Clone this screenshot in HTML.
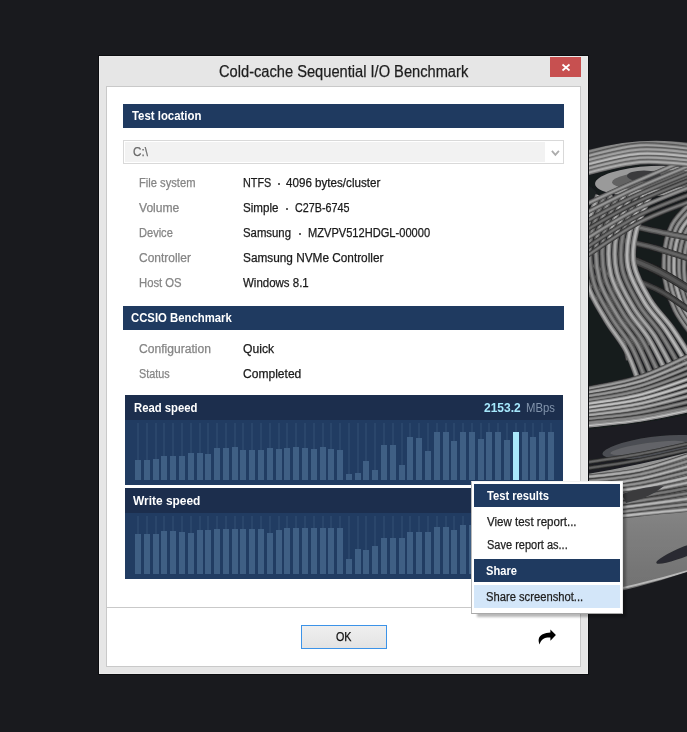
<!DOCTYPE html>
<html><head><meta charset="utf-8">
<style>
html,body{margin:0;padding:0;}
body{width:687px;height:732px;overflow:hidden;background:#191a1e;position:relative;font-family:"Liberation Sans",sans-serif;}
.a{position:absolute;}
.t{position:absolute;white-space:nowrap;line-height:1;}
</style></head><body>
<!-- background ribbons -->
<svg class="a" style="left:0;top:0" width="687" height="732" viewBox="0 0 687 732">
<defs><clipPath id="blob"><path d="M588 150 Q640 136 690 143 L690 571 Q640 588 588 598 Z"/></clipPath><filter id="sft"><feGaussianBlur stdDeviation="0.5"/></filter></defs>
<g clip-path="url(#blob)" fill="none" filter="url(#sft)" stroke-linecap="butt">
<rect x="585" y="130" width="110" height="480" fill="#191a1e"/>
<ellipse cx="652" cy="181" rx="57" ry="15" fill="#9a9a9a" transform="rotate(-3 652 181)"/>
<ellipse cx="658" cy="180" rx="46" ry="9.5" fill="#626262" transform="rotate(-3 658 180)"/>
<ellipse cx="644" cy="176" rx="17" ry="5.5" fill="#3a3b3e"/>
<path d="M585 186 Q593 185 597 194 Q594 203 586 208 Z" fill="#1e2024"/>
<path d="M705.0 190.0 C699.5 195.8 678.8 211.7 672.0 225.0 C665.2 238.3 663.5 255.8 664.0 270.0 C664.5 284.2 669.0 297.5 675.0 310.0 C681.0 322.5 695.8 339.2 700.0 345.0" stroke="#383838" stroke-width="5.40"/>
<path d="M705.0 190.0 C699.5 195.8 678.8 211.7 672.0 225.0 C665.2 238.3 663.5 255.8 664.0 270.0 C664.5 284.2 669.0 297.5 675.0 310.0 C681.0 322.5 695.8 339.2 700.0 345.0" stroke="#676767" stroke-width="4.20"/>
<path d="M705.0 190.0 C699.5 195.8 678.8 211.7 672.0 225.0 C665.2 238.3 663.5 255.8 664.0 270.0 C664.5 284.2 669.0 297.5 675.0 310.0 C681.0 322.5 695.8 339.2 700.0 345.0" stroke="#8d8d8d" stroke-width="2.10"/>
<path d="M707.5 193.8 C702.3 199.4 682.9 214.8 676.5 227.5 C670.1 240.2 668.5 256.5 669.0 270.0 C669.5 283.5 673.6 296.7 679.2 308.8 C684.9 320.8 699.0 336.9 703.0 342.5" stroke="#3b3b3b" stroke-width="5.40"/>
<path d="M707.5 193.8 C702.3 199.4 682.9 214.8 676.5 227.5 C670.1 240.2 668.5 256.5 669.0 270.0 C669.5 283.5 673.6 296.7 679.2 308.8 C684.9 320.8 699.0 336.9 703.0 342.5" stroke="#6c6c6c" stroke-width="4.20"/>
<path d="M707.5 193.8 C702.3 199.4 682.9 214.8 676.5 227.5 C670.1 240.2 668.5 256.5 669.0 270.0 C669.5 283.5 673.6 296.7 679.2 308.8 C684.9 320.8 699.0 336.9 703.0 342.5" stroke="#949494" stroke-width="2.10"/>
<path d="M710.0 197.5 C705.2 202.9 687.0 217.9 681.0 230.0 C675.0 242.1 673.6 257.1 674.0 270.0 C674.4 282.9 678.2 295.8 683.5 307.5 C688.8 319.2 702.2 334.6 706.0 340.0" stroke="#454545" stroke-width="5.40"/>
<path d="M710.0 197.5 C705.2 202.9 687.0 217.9 681.0 230.0 C675.0 242.1 673.6 257.1 674.0 270.0 C674.4 282.9 678.2 295.8 683.5 307.5 C688.8 319.2 702.2 334.6 706.0 340.0" stroke="#7e7e7e" stroke-width="4.20"/>
<path d="M710.0 197.5 C705.2 202.9 687.0 217.9 681.0 230.0 C675.0 242.1 673.6 257.1 674.0 270.0 C674.4 282.9 678.2 295.8 683.5 307.5 C688.8 319.2 702.2 334.6 706.0 340.0" stroke="#adadad" stroke-width="2.10"/>
<path d="M712.5 201.2 C708.0 206.5 691.1 221.0 685.5 232.5 C679.9 244.0 678.6 257.7 679.0 270.0 C679.4 282.3 682.8 295.0 687.8 306.2 C692.8 317.5 705.5 332.3 709.0 337.5" stroke="#393939" stroke-width="5.40"/>
<path d="M712.5 201.2 C708.0 206.5 691.1 221.0 685.5 232.5 C679.9 244.0 678.6 257.7 679.0 270.0 C679.4 282.3 682.8 295.0 687.8 306.2 C692.8 317.5 705.5 332.3 709.0 337.5" stroke="#686868" stroke-width="4.20"/>
<path d="M712.5 201.2 C708.0 206.5 691.1 221.0 685.5 232.5 C679.9 244.0 678.6 257.7 679.0 270.0 C679.4 282.3 682.8 295.0 687.8 306.2 C692.8 317.5 705.5 332.3 709.0 337.5" stroke="#8e8e8e" stroke-width="2.10"/>
<path d="M715.0 205.0 C710.8 210.0 695.2 224.2 690.0 235.0 C684.8 245.8 683.7 258.3 684.0 270.0 C684.3 281.7 687.3 294.2 692.0 305.0 C696.7 315.8 708.7 330.0 712.0 335.0" stroke="#3a3a3a" stroke-width="5.40"/>
<path d="M715.0 205.0 C710.8 210.0 695.2 224.2 690.0 235.0 C684.8 245.8 683.7 258.3 684.0 270.0 C684.3 281.7 687.3 294.2 692.0 305.0 C696.7 315.8 708.7 330.0 712.0 335.0" stroke="#6a6a6a" stroke-width="4.20"/>
<path d="M715.0 205.0 C710.8 210.0 695.2 224.2 690.0 235.0 C684.8 245.8 683.7 258.3 684.0 270.0 C684.3 281.7 687.3 294.2 692.0 305.0 C696.7 315.8 708.7 330.0 712.0 335.0" stroke="#919191" stroke-width="2.10"/>
<path d="M625.0 224.0 C629.2 225.0 637.5 227.3 650.0 230.0 C662.5 232.7 691.7 238.3 700.0 240.0" stroke="#2e2e2e" stroke-width="6.20"/>
<path d="M625.0 224.0 C629.2 225.0 637.5 227.3 650.0 230.0 C662.5 232.7 691.7 238.3 700.0 240.0" stroke="#545454" stroke-width="5.00"/>
<path d="M625.0 224.0 C629.2 225.0 637.5 227.3 650.0 230.0 C662.5 232.7 691.7 238.3 700.0 240.0" stroke="#737373" stroke-width="2.50"/>
<path d="M622.0 240.0 C627.5 241.3 642.0 244.3 655.0 248.0 C668.0 251.7 692.5 259.7 700.0 262.0" stroke="#282828" stroke-width="6.20"/>
<path d="M622.0 240.0 C627.5 241.3 642.0 244.3 655.0 248.0 C668.0 251.7 692.5 259.7 700.0 262.0" stroke="#4a4a4a" stroke-width="5.00"/>
<path d="M622.0 240.0 C627.5 241.3 642.0 244.3 655.0 248.0 C668.0 251.7 692.5 259.7 700.0 262.0" stroke="#656565" stroke-width="2.50"/>
<path d="M628.0 258.0 C633.3 260.3 648.0 265.7 660.0 272.0 C672.0 278.3 693.3 292.0 700.0 296.0" stroke="#222222" stroke-width="8.20"/>
<path d="M628.0 258.0 C633.3 260.3 648.0 265.7 660.0 272.0 C672.0 278.3 693.3 292.0 700.0 296.0" stroke="#3f3f3f" stroke-width="7.00"/>
<path d="M628.0 258.0 C633.3 260.3 648.0 265.7 660.0 272.0 C672.0 278.3 693.3 292.0 700.0 296.0" stroke="#565656" stroke-width="3.50"/>
<path d="M625.0 276.0 C631.2 278.7 649.5 285.0 662.0 292.0 C674.5 299.0 693.7 313.7 700.0 318.0" stroke="#202020" stroke-width="6.20"/>
<path d="M625.0 276.0 C631.2 278.7 649.5 285.0 662.0 292.0 C674.5 299.0 693.7 313.7 700.0 318.0" stroke="#3b3b3b" stroke-width="5.00"/>
<path d="M625.0 276.0 C631.2 278.7 649.5 285.0 662.0 292.0 C674.5 299.0 693.7 313.7 700.0 318.0" stroke="#515151" stroke-width="2.50"/>
<path d="M580.0 262.0 C584.2 263.7 596.7 265.7 605.0 272.0 C613.3 278.3 622.5 287.8 630.0 300.0 C637.5 312.2 646.7 337.5 650.0 345.0" stroke="#323232" stroke-width="4.70"/>
<path d="M580.0 262.0 C584.2 263.7 596.7 265.7 605.0 272.0 C613.3 278.3 622.5 287.8 630.0 300.0 C637.5 312.2 646.7 337.5 650.0 345.0" stroke="#5c5c5c" stroke-width="3.50"/>
<path d="M580.0 262.0 C584.2 263.7 596.7 265.7 605.0 272.0 C613.3 278.3 622.5 287.8 630.0 300.0 C637.5 312.2 646.7 337.5 650.0 345.0" stroke="#7e7e7e" stroke-width="1.75"/>
<path d="M580.0 272.0 C583.9 273.6 595.7 275.6 603.3 281.3 C611.0 287.1 619.4 295.2 626.0 306.7 C632.6 318.1 639.9 342.8 642.7 350.0" stroke="#272727" stroke-width="4.70"/>
<path d="M580.0 272.0 C583.9 273.6 595.7 275.6 603.3 281.3 C611.0 287.1 619.4 295.2 626.0 306.7 C632.6 318.1 639.9 342.8 642.7 350.0" stroke="#484848" stroke-width="3.50"/>
<path d="M580.0 272.0 C583.9 273.6 595.7 275.6 603.3 281.3 C611.0 287.1 619.4 295.2 626.0 306.7 C632.6 318.1 639.9 342.8 642.7 350.0" stroke="#636363" stroke-width="1.75"/>
<path d="M580.0 282.0 C583.6 283.4 594.7 285.4 601.7 290.7 C608.7 295.9 616.4 302.6 622.0 313.3 C627.6 324.1 633.1 348.1 635.3 355.0" stroke="#303030" stroke-width="4.70"/>
<path d="M580.0 282.0 C583.6 283.4 594.7 285.4 601.7 290.7 C608.7 295.9 616.4 302.6 622.0 313.3 C627.6 324.1 633.1 348.1 635.3 355.0" stroke="#585858" stroke-width="3.50"/>
<path d="M580.0 282.0 C583.6 283.4 594.7 285.4 601.7 290.7 C608.7 295.9 616.4 302.6 622.0 313.3 C627.6 324.1 633.1 348.1 635.3 355.0" stroke="#797979" stroke-width="1.75"/>
<path d="M580.0 292.0 C583.3 293.3 593.7 295.3 600.0 300.0 C606.3 304.7 613.3 310.0 618.0 320.0 C622.7 330.0 626.3 353.3 628.0 360.0" stroke="#333333" stroke-width="4.70"/>
<path d="M580.0 292.0 C583.3 293.3 593.7 295.3 600.0 300.0 C606.3 304.7 613.3 310.0 618.0 320.0 C622.7 330.0 626.3 353.3 628.0 360.0" stroke="#5e5e5e" stroke-width="3.50"/>
<path d="M580.0 292.0 C583.3 293.3 593.7 295.3 600.0 300.0 C606.3 304.7 613.3 310.0 618.0 320.0 C622.7 330.0 626.3 353.3 628.0 360.0" stroke="#818181" stroke-width="1.75"/>
<path d="M598.0 195.0 C595.7 202.5 585.7 225.0 584.0 240.0 C582.3 255.0 584.3 271.7 588.0 285.0 C591.7 298.3 599.7 309.2 606.0 320.0 C612.3 330.8 620.3 339.2 626.0 350.0 C631.7 360.8 637.7 379.2 640.0 385.0" stroke="#535353" stroke-width="5.80"/>
<path d="M598.0 195.0 C595.7 202.5 585.7 225.0 584.0 240.0 C582.3 255.0 584.3 271.7 588.0 285.0 C591.7 298.3 599.7 309.2 606.0 320.0 C612.3 330.8 620.3 339.2 626.0 350.0 C631.7 360.8 637.7 379.2 640.0 385.0" stroke="#7d7d7d" stroke-width="4.60"/>
<path d="M598.0 195.0 C595.7 202.5 585.7 225.0 584.0 240.0 C582.3 255.0 584.3 271.7 588.0 285.0 C591.7 298.3 599.7 309.2 606.0 320.0 C612.3 330.8 620.3 339.2 626.0 350.0 C631.7 360.8 637.7 379.2 640.0 385.0" stroke="#ababab" stroke-width="2.30"/>
<path d="M604.5 195.0 C602.2 202.3 592.3 224.4 590.5 239.0 C588.7 253.6 590.2 269.4 593.8 282.5 C597.2 295.6 605.2 306.7 611.5 317.5 C617.8 328.3 625.9 336.5 631.8 347.2 C637.6 358.0 644.2 376.3 646.8 382.1" stroke="#404040" stroke-width="5.80"/>
<path d="M604.5 195.0 C602.2 202.3 592.3 224.4 590.5 239.0 C588.7 253.6 590.2 269.4 593.8 282.5 C597.2 295.6 605.2 306.7 611.5 317.5 C617.8 328.3 625.9 336.5 631.8 347.2 C637.6 358.0 644.2 376.3 646.8 382.1" stroke="#5f5f5f" stroke-width="4.60"/>
<path d="M604.5 195.0 C602.2 202.3 592.3 224.4 590.5 239.0 C588.7 253.6 590.2 269.4 593.8 282.5 C597.2 295.6 605.2 306.7 611.5 317.5 C617.8 328.3 625.9 336.5 631.8 347.2 C637.6 358.0 644.2 376.3 646.8 382.1" stroke="#828282" stroke-width="2.30"/>
<path d="M611.0 195.0 C608.7 202.2 598.9 223.8 597.0 238.0 C595.1 252.2 596.2 267.2 599.5 280.0 C602.8 292.8 610.7 304.2 617.0 315.0 C623.3 325.8 631.4 333.8 637.5 344.5 C643.6 355.2 650.8 373.5 653.5 379.2" stroke="#464646" stroke-width="5.80"/>
<path d="M611.0 195.0 C608.7 202.2 598.9 223.8 597.0 238.0 C595.1 252.2 596.2 267.2 599.5 280.0 C602.8 292.8 610.7 304.2 617.0 315.0 C623.3 325.8 631.4 333.8 637.5 344.5 C643.6 355.2 650.8 373.5 653.5 379.2" stroke="#686868" stroke-width="4.60"/>
<path d="M611.0 195.0 C608.7 202.2 598.9 223.8 597.0 238.0 C595.1 252.2 596.2 267.2 599.5 280.0 C602.8 292.8 610.7 304.2 617.0 315.0 C623.3 325.8 631.4 333.8 637.5 344.5 C643.6 355.2 650.8 373.5 653.5 379.2" stroke="#8e8e8e" stroke-width="2.30"/>
<path d="M617.5 195.0 C615.2 202.0 605.5 223.2 603.5 237.0 C601.5 250.8 602.1 264.9 605.2 277.5 C608.4 290.1 616.2 301.8 622.5 312.5 C628.8 323.2 637.0 331.1 643.2 341.8 C649.5 352.4 657.4 370.6 660.2 376.4" stroke="#404040" stroke-width="5.80"/>
<path d="M617.5 195.0 C615.2 202.0 605.5 223.2 603.5 237.0 C601.5 250.8 602.1 264.9 605.2 277.5 C608.4 290.1 616.2 301.8 622.5 312.5 C628.8 323.2 637.0 331.1 643.2 341.8 C649.5 352.4 657.4 370.6 660.2 376.4" stroke="#5f5f5f" stroke-width="4.60"/>
<path d="M617.5 195.0 C615.2 202.0 605.5 223.2 603.5 237.0 C601.5 250.8 602.1 264.9 605.2 277.5 C608.4 290.1 616.2 301.8 622.5 312.5 C628.8 323.2 637.0 331.1 643.2 341.8 C649.5 352.4 657.4 370.6 660.2 376.4" stroke="#828282" stroke-width="2.30"/>
<path d="M624.0 195.0 C621.7 201.8 612.2 222.7 610.0 236.0 C607.8 249.3 608.0 262.7 611.0 275.0 C614.0 287.3 621.7 299.3 628.0 310.0 C634.3 320.7 642.5 328.4 649.0 339.0 C655.5 349.6 664.0 367.8 667.0 373.5" stroke="#545454" stroke-width="5.80"/>
<path d="M624.0 195.0 C621.7 201.8 612.2 222.7 610.0 236.0 C607.8 249.3 608.0 262.7 611.0 275.0 C614.0 287.3 621.7 299.3 628.0 310.0 C634.3 320.7 642.5 328.4 649.0 339.0 C655.5 349.6 664.0 367.8 667.0 373.5" stroke="#7d7d7d" stroke-width="4.60"/>
<path d="M624.0 195.0 C621.7 201.8 612.2 222.7 610.0 236.0 C607.8 249.3 608.0 262.7 611.0 275.0 C614.0 287.3 621.7 299.3 628.0 310.0 C634.3 320.7 642.5 328.4 649.0 339.0 C655.5 349.6 664.0 367.8 667.0 373.5" stroke="#acacac" stroke-width="2.30"/>
<path d="M630.5 195.0 C628.2 201.7 618.8 222.1 616.5 235.0 C614.2 247.9 613.9 260.4 616.8 272.5 C619.6 284.6 627.2 296.9 633.5 307.5 C639.8 318.1 648.0 325.7 654.8 336.2 C661.5 346.8 670.6 364.9 673.8 370.6" stroke="#515151" stroke-width="5.80"/>
<path d="M630.5 195.0 C628.2 201.7 618.8 222.1 616.5 235.0 C614.2 247.9 613.9 260.4 616.8 272.5 C619.6 284.6 627.2 296.9 633.5 307.5 C639.8 318.1 648.0 325.7 654.8 336.2 C661.5 346.8 670.6 364.9 673.8 370.6" stroke="#797979" stroke-width="4.60"/>
<path d="M630.5 195.0 C628.2 201.7 618.8 222.1 616.5 235.0 C614.2 247.9 613.9 260.4 616.8 272.5 C619.6 284.6 627.2 296.9 633.5 307.5 C639.8 318.1 648.0 325.7 654.8 336.2 C661.5 346.8 670.6 364.9 673.8 370.6" stroke="#a5a5a5" stroke-width="2.30"/>
<path d="M637.0 195.0 C634.7 201.5 625.4 221.5 623.0 234.0 C620.6 246.5 619.8 258.2 622.5 270.0 C625.2 281.8 632.7 294.4 639.0 305.0 C645.3 315.6 653.6 323.0 660.5 333.5 C667.4 344.0 677.2 362.0 680.5 367.8" stroke="#3e3e3e" stroke-width="5.80"/>
<path d="M637.0 195.0 C634.7 201.5 625.4 221.5 623.0 234.0 C620.6 246.5 619.8 258.2 622.5 270.0 C625.2 281.8 632.7 294.4 639.0 305.0 C645.3 315.6 653.6 323.0 660.5 333.5 C667.4 344.0 677.2 362.0 680.5 367.8" stroke="#5d5d5d" stroke-width="4.60"/>
<path d="M637.0 195.0 C634.7 201.5 625.4 221.5 623.0 234.0 C620.6 246.5 619.8 258.2 622.5 270.0 C625.2 281.8 632.7 294.4 639.0 305.0 C645.3 315.6 653.6 323.0 660.5 333.5 C667.4 344.0 677.2 362.0 680.5 367.8" stroke="#7f7f7f" stroke-width="2.30"/>
<path d="M643.5 195.0 C641.2 201.3 632.0 220.9 629.5 233.0 C627.0 245.1 625.8 255.9 628.2 267.5 C630.8 279.1 638.2 292.0 644.5 302.5 C650.8 313.0 659.1 320.4 666.2 330.8 C673.4 341.1 683.8 359.2 687.2 364.9" stroke="#595959" stroke-width="5.80"/>
<path d="M643.5 195.0 C641.2 201.3 632.0 220.9 629.5 233.0 C627.0 245.1 625.8 255.9 628.2 267.5 C630.8 279.1 638.2 292.0 644.5 302.5 C650.8 313.0 659.1 320.4 666.2 330.8 C673.4 341.1 683.8 359.2 687.2 364.9" stroke="#858585" stroke-width="4.60"/>
<path d="M643.5 195.0 C641.2 201.3 632.0 220.9 629.5 233.0 C627.0 245.1 625.8 255.9 628.2 267.5 C630.8 279.1 638.2 292.0 644.5 302.5 C650.8 313.0 659.1 320.4 666.2 330.8 C673.4 341.1 683.8 359.2 687.2 364.9" stroke="#b5b5b5" stroke-width="2.30"/>
<path d="M650.0 195.0 C647.7 201.2 638.7 220.3 636.0 232.0 C633.3 243.7 631.7 253.7 634.0 265.0 C636.3 276.3 643.7 289.5 650.0 300.0 C656.3 310.5 664.7 317.7 672.0 328.0 C679.3 338.3 690.3 356.3 694.0 362.0" stroke="#585858" stroke-width="5.80"/>
<path d="M650.0 195.0 C647.7 201.2 638.7 220.3 636.0 232.0 C633.3 243.7 631.7 253.7 634.0 265.0 C636.3 276.3 643.7 289.5 650.0 300.0 C656.3 310.5 664.7 317.7 672.0 328.0 C679.3 338.3 690.3 356.3 694.0 362.0" stroke="#848484" stroke-width="4.60"/>
<path d="M650.0 195.0 C647.7 201.2 638.7 220.3 636.0 232.0 C633.3 243.7 631.7 253.7 634.0 265.0 C636.3 276.3 643.7 289.5 650.0 300.0 C656.3 310.5 664.7 317.7 672.0 328.0 C679.3 338.3 690.3 356.3 694.0 362.0" stroke="#b4b4b4" stroke-width="2.30"/>
<path d="M578.0 208.0 C586.7 204.0 608.8 193.3 630.0 184.0 C651.2 174.7 692.5 157.3 705.0 152.0" stroke="#454545" stroke-width="4.80"/>
<path d="M578.0 208.0 C586.7 204.0 608.8 193.3 630.0 184.0 C651.2 174.7 692.5 157.3 705.0 152.0" stroke="#717171" stroke-width="3.60"/>
<path d="M578.0 208.0 C586.7 204.0 608.8 193.3 630.0 184.0 C651.2 174.7 692.5 157.3 705.0 152.0" stroke="#9a9a9a" stroke-width="1.80"/>
<path d="M578.0 217.0 C586.9 212.6 610.5 199.9 631.7 190.3 C652.8 180.7 692.8 164.5 705.0 159.3" stroke="#434343" stroke-width="4.80"/>
<path d="M578.0 217.0 C586.9 212.6 610.5 199.9 631.7 190.3 C652.8 180.7 692.8 164.5 705.0 159.3" stroke="#6f6f6f" stroke-width="3.60"/>
<path d="M578.0 217.0 C586.9 212.6 610.5 199.9 631.7 190.3 C652.8 180.7 692.8 164.5 705.0 159.3" stroke="#989898" stroke-width="1.80"/>
<path d="M578.0 226.0 C587.2 221.1 612.2 206.6 633.3 196.7 C654.5 186.8 693.1 171.7 705.0 166.7" stroke="#363636" stroke-width="4.80"/>
<path d="M578.0 226.0 C587.2 221.1 612.2 206.6 633.3 196.7 C654.5 186.8 693.1 171.7 705.0 166.7" stroke="#585858" stroke-width="3.60"/>
<path d="M578.0 226.0 C587.2 221.1 612.2 206.6 633.3 196.7 C654.5 186.8 693.1 171.7 705.0 166.7" stroke="#797979" stroke-width="1.80"/>
<path d="M578.0 235.0 C587.5 229.7 613.8 213.2 635.0 203.0 C656.2 192.8 693.3 178.8 705.0 174.0" stroke="#313131" stroke-width="4.80"/>
<path d="M578.0 235.0 C587.5 229.7 613.8 213.2 635.0 203.0 C656.2 192.8 693.3 178.8 705.0 174.0" stroke="#515151" stroke-width="3.60"/>
<path d="M578.0 235.0 C587.5 229.7 613.8 213.2 635.0 203.0 C656.2 192.8 693.3 178.8 705.0 174.0" stroke="#6f6f6f" stroke-width="1.80"/>
<path d="M578.0 244.0 C587.8 238.2 615.5 219.8 636.7 209.3 C657.8 198.9 693.6 186.0 705.0 181.3" stroke="#414141" stroke-width="4.80"/>
<path d="M578.0 244.0 C587.8 238.2 615.5 219.8 636.7 209.3 C657.8 198.9 693.6 186.0 705.0 181.3" stroke="#6b6b6b" stroke-width="3.60"/>
<path d="M578.0 244.0 C587.8 238.2 615.5 219.8 636.7 209.3 C657.8 198.9 693.6 186.0 705.0 181.3" stroke="#929292" stroke-width="1.80"/>
<path d="M578.0 253.0 C588.1 246.8 617.2 226.4 638.3 215.7 C659.5 204.9 693.9 193.2 705.0 188.7" stroke="#333333" stroke-width="4.80"/>
<path d="M578.0 253.0 C588.1 246.8 617.2 226.4 638.3 215.7 C659.5 204.9 693.9 193.2 705.0 188.7" stroke="#545454" stroke-width="3.60"/>
<path d="M578.0 253.0 C588.1 246.8 617.2 226.4 638.3 215.7 C659.5 204.9 693.9 193.2 705.0 188.7" stroke="#727272" stroke-width="1.80"/>
<path d="M578.0 262.0 C588.3 255.3 618.8 233.0 640.0 222.0 C661.2 211.0 694.2 200.3 705.0 196.0" stroke="#373737" stroke-width="4.80"/>
<path d="M578.0 262.0 C588.3 255.3 618.8 233.0 640.0 222.0 C661.2 211.0 694.2 200.3 705.0 196.0" stroke="#5a5a5a" stroke-width="3.60"/>
<path d="M578.0 262.0 C588.3 255.3 618.8 233.0 640.0 222.0 C661.2 211.0 694.2 200.3 705.0 196.0" stroke="#7b7b7b" stroke-width="1.80"/>
<path d="M575.0 151.0 C585.8 148.7 618.3 138.3 640.0 137.0 C661.7 135.7 694.2 142.0 705.0 143.0" stroke="#4f4f4f" stroke-width="5.00"/>
<path d="M575.0 151.0 C585.8 148.7 618.3 138.3 640.0 137.0 C661.7 135.7 694.2 142.0 705.0 143.0" stroke="#6c6c6c" stroke-width="3.80"/>
<path d="M575.0 151.0 C585.8 148.7 618.3 138.3 640.0 137.0 C661.7 135.7 694.2 142.0 705.0 143.0" stroke="#949494" stroke-width="1.90"/>
<path d="M575.0 155.2 C585.8 152.8 618.3 142.6 640.0 141.2 C661.7 139.8 694.2 145.9 705.0 146.8" stroke="#494949" stroke-width="5.00"/>
<path d="M575.0 155.2 C585.8 152.8 618.3 142.6 640.0 141.2 C661.7 139.8 694.2 145.9 705.0 146.8" stroke="#646464" stroke-width="3.80"/>
<path d="M575.0 155.2 C585.8 152.8 618.3 142.6 640.0 141.2 C661.7 139.8 694.2 145.9 705.0 146.8" stroke="#888888" stroke-width="1.90"/>
<path d="M575.0 159.3 C585.8 157.0 618.3 146.8 640.0 145.3 C661.7 143.9 694.2 149.8 705.0 150.7" stroke="#565656" stroke-width="5.00"/>
<path d="M575.0 159.3 C585.8 157.0 618.3 146.8 640.0 145.3 C661.7 143.9 694.2 149.8 705.0 150.7" stroke="#767676" stroke-width="3.80"/>
<path d="M575.0 159.3 C585.8 157.0 618.3 146.8 640.0 145.3 C661.7 143.9 694.2 149.8 705.0 150.7" stroke="#a1a1a1" stroke-width="1.90"/>
<path d="M575.0 163.5 C585.8 161.2 618.3 151.0 640.0 149.5 C661.7 148.0 694.2 153.7 705.0 154.5" stroke="#555555" stroke-width="5.00"/>
<path d="M575.0 163.5 C585.8 161.2 618.3 151.0 640.0 149.5 C661.7 148.0 694.2 153.7 705.0 154.5" stroke="#757575" stroke-width="3.80"/>
<path d="M575.0 163.5 C585.8 161.2 618.3 151.0 640.0 149.5 C661.7 148.0 694.2 153.7 705.0 154.5" stroke="#a0a0a0" stroke-width="1.90"/>
<path d="M575.0 167.7 C585.8 165.3 618.3 155.2 640.0 153.7 C661.7 152.1 694.2 157.6 705.0 158.3" stroke="#626262" stroke-width="5.00"/>
<path d="M575.0 167.7 C585.8 165.3 618.3 155.2 640.0 153.7 C661.7 152.1 694.2 157.6 705.0 158.3" stroke="#868686" stroke-width="3.80"/>
<path d="M575.0 167.7 C585.8 165.3 618.3 155.2 640.0 153.7 C661.7 152.1 694.2 157.6 705.0 158.3" stroke="#b7b7b7" stroke-width="1.90"/>
<path d="M575.0 171.8 C585.8 169.5 618.3 159.4 640.0 157.8 C661.7 156.2 694.2 161.4 705.0 162.2" stroke="#585858" stroke-width="5.00"/>
<path d="M575.0 171.8 C585.8 169.5 618.3 159.4 640.0 157.8 C661.7 156.2 694.2 161.4 705.0 162.2" stroke="#787878" stroke-width="3.80"/>
<path d="M575.0 171.8 C585.8 169.5 618.3 159.4 640.0 157.8 C661.7 156.2 694.2 161.4 705.0 162.2" stroke="#a4a4a4" stroke-width="1.90"/>
<path d="M575.0 176.0 C585.8 173.7 618.3 163.7 640.0 162.0 C661.7 160.3 694.2 165.3 705.0 166.0" stroke="#5c5c5c" stroke-width="5.00"/>
<path d="M575.0 176.0 C585.8 173.7 618.3 163.7 640.0 162.0 C661.7 160.3 694.2 165.3 705.0 166.0" stroke="#7d7d7d" stroke-width="3.80"/>
<path d="M575.0 176.0 C585.8 173.7 618.3 163.7 640.0 162.0 C661.7 160.3 694.2 165.3 705.0 166.0" stroke="#ababab" stroke-width="1.90"/>
<path d="M575.0 391.0 C585.8 388.7 618.3 384.2 640.0 377.0 C661.7 369.8 694.2 352.8 705.0 348.0" stroke="#3d3d3d" stroke-width="4.80"/>
<path d="M575.0 391.0 C585.8 388.7 618.3 384.2 640.0 377.0 C661.7 369.8 694.2 352.8 705.0 348.0" stroke="#707070" stroke-width="3.60"/>
<path d="M575.0 391.0 C585.8 388.7 618.3 384.2 640.0 377.0 C661.7 369.8 694.2 352.8 705.0 348.0" stroke="#9a9a9a" stroke-width="1.80"/>
<path d="M575.0 394.7 C585.8 392.5 618.3 388.2 640.0 381.4 C661.7 374.7 694.2 358.8 705.0 354.2" stroke="#424242" stroke-width="4.80"/>
<path d="M575.0 394.7 C585.8 392.5 618.3 388.2 640.0 381.4 C661.7 374.7 694.2 358.8 705.0 354.2" stroke="#797979" stroke-width="3.60"/>
<path d="M575.0 394.7 C585.8 392.5 618.3 388.2 640.0 381.4 C661.7 374.7 694.2 358.8 705.0 354.2" stroke="#a6a6a6" stroke-width="1.80"/>
<path d="M575.0 398.3 C585.8 396.3 618.3 392.2 640.0 385.9 C661.7 379.6 694.2 364.7 705.0 360.4" stroke="#3c3c3c" stroke-width="4.80"/>
<path d="M575.0 398.3 C585.8 396.3 618.3 392.2 640.0 385.9 C661.7 379.6 694.2 364.7 705.0 360.4" stroke="#6e6e6e" stroke-width="3.60"/>
<path d="M575.0 398.3 C585.8 396.3 618.3 392.2 640.0 385.9 C661.7 379.6 694.2 364.7 705.0 360.4" stroke="#969696" stroke-width="1.80"/>
<path d="M575.0 402.0 C585.8 400.1 618.3 396.2 640.0 390.3 C661.7 384.4 694.2 370.6 705.0 366.7" stroke="#373737" stroke-width="4.80"/>
<path d="M575.0 402.0 C585.8 400.1 618.3 396.2 640.0 390.3 C661.7 384.4 694.2 370.6 705.0 366.7" stroke="#646464" stroke-width="3.60"/>
<path d="M575.0 402.0 C585.8 400.1 618.3 396.2 640.0 390.3 C661.7 384.4 694.2 370.6 705.0 366.7" stroke="#898989" stroke-width="1.80"/>
<path d="M575.0 405.7 C585.8 403.9 618.3 400.2 640.0 394.8 C661.7 389.3 694.2 376.5 705.0 372.9" stroke="#4d4d4d" stroke-width="4.80"/>
<path d="M575.0 405.7 C585.8 403.9 618.3 400.2 640.0 394.8 C661.7 389.3 694.2 376.5 705.0 372.9" stroke="#8c8c8c" stroke-width="3.60"/>
<path d="M575.0 405.7 C585.8 403.9 618.3 400.2 640.0 394.8 C661.7 389.3 694.2 376.5 705.0 372.9" stroke="#c0c0c0" stroke-width="1.80"/>
<path d="M575.0 409.3 C585.8 407.6 618.3 404.3 640.0 399.2 C661.7 394.2 694.2 382.5 705.0 379.1" stroke="#4d4d4d" stroke-width="4.80"/>
<path d="M575.0 409.3 C585.8 407.6 618.3 404.3 640.0 399.2 C661.7 394.2 694.2 382.5 705.0 379.1" stroke="#8c8c8c" stroke-width="3.60"/>
<path d="M575.0 409.3 C585.8 407.6 618.3 404.3 640.0 399.2 C661.7 394.2 694.2 382.5 705.0 379.1" stroke="#c0c0c0" stroke-width="1.80"/>
<path d="M575.0 413.0 C585.8 411.4 618.3 408.3 640.0 403.7 C661.7 399.1 694.2 388.4 705.0 385.3" stroke="#484848" stroke-width="4.80"/>
<path d="M575.0 413.0 C585.8 411.4 618.3 408.3 640.0 403.7 C661.7 399.1 694.2 388.4 705.0 385.3" stroke="#848484" stroke-width="3.60"/>
<path d="M575.0 413.0 C585.8 411.4 618.3 408.3 640.0 403.7 C661.7 399.1 694.2 388.4 705.0 385.3" stroke="#b4b4b4" stroke-width="1.80"/>
<path d="M575.0 416.7 C585.8 415.2 618.3 412.3 640.0 408.1 C661.7 403.9 694.2 394.3 705.0 391.6" stroke="#444444" stroke-width="4.80"/>
<path d="M575.0 416.7 C585.8 415.2 618.3 412.3 640.0 408.1 C661.7 403.9 694.2 394.3 705.0 391.6" stroke="#7c7c7c" stroke-width="3.60"/>
<path d="M575.0 416.7 C585.8 415.2 618.3 412.3 640.0 408.1 C661.7 403.9 694.2 394.3 705.0 391.6" stroke="#aaaaaa" stroke-width="1.80"/>
<path d="M575.0 420.3 C585.8 419.0 618.3 416.3 640.0 412.6 C661.7 408.8 694.2 400.2 705.0 397.8" stroke="#383838" stroke-width="4.80"/>
<path d="M575.0 420.3 C585.8 419.0 618.3 416.3 640.0 412.6 C661.7 408.8 694.2 400.2 705.0 397.8" stroke="#666666" stroke-width="3.60"/>
<path d="M575.0 420.3 C585.8 419.0 618.3 416.3 640.0 412.6 C661.7 408.8 694.2 400.2 705.0 397.8" stroke="#8b8b8b" stroke-width="1.80"/>
<path d="M575.0 424.0 C585.8 422.8 618.3 420.3 640.0 417.0 C661.7 413.7 694.2 406.2 705.0 404.0" stroke="#353535" stroke-width="4.80"/>
<path d="M575.0 424.0 C585.8 422.8 618.3 420.3 640.0 417.0 C661.7 413.7 694.2 406.2 705.0 404.0" stroke="#616161" stroke-width="3.60"/>
<path d="M575.0 424.0 C585.8 422.8 618.3 420.3 640.0 417.0 C661.7 413.7 694.2 406.2 705.0 404.0" stroke="#858585" stroke-width="1.80"/>
<path d="M575.0 427.0 C585.8 425.8 618.3 423.3 640.0 420.0 C661.7 416.7 694.2 409.2 705.0 407.0" stroke="#9e9e9e" stroke-width="3.70"/>
<path d="M575.0 427.0 C585.8 425.8 618.3 423.3 640.0 420.0 C661.7 416.7 694.2 409.2 705.0 407.0" stroke="#909090" stroke-width="2.50"/>
<path d="M575.0 427.0 C585.8 425.8 618.3 423.3 640.0 420.0 C661.7 416.7 694.2 409.2 705.0 407.0" stroke="#c5c5c5" stroke-width="1.25"/>
<path d="M575 431 Q640 425 705 412 L705 452 Q640 462 575 478 Z" fill="#1c1e22"/>
<ellipse cx="652" cy="447" rx="50" ry="10" fill="#4c4e52" transform="rotate(-8 652 447)"/>
<ellipse cx="648" cy="448" rx="38" ry="5" fill="#626467" transform="rotate(-8 648 448)"/>
<path d="M575.0 464.0 C585.8 462.3 618.3 458.0 640.0 454.0 C661.7 450.0 694.2 442.3 705.0 440.0" stroke="#2a2a2a" stroke-width="4.20"/>
<path d="M575.0 464.0 C585.8 462.3 618.3 458.0 640.0 454.0 C661.7 450.0 694.2 442.3 705.0 440.0" stroke="#4c4c4c" stroke-width="3.00"/>
<path d="M575.0 464.0 C585.8 462.3 618.3 458.0 640.0 454.0 C661.7 450.0 694.2 442.3 705.0 440.0" stroke="#686868" stroke-width="1.50"/>
<path d="M575.0 470.0 C585.8 468.3 618.3 464.0 640.0 460.0 C661.7 456.0 694.2 448.3 705.0 446.0" stroke="#272727" stroke-width="4.20"/>
<path d="M575.0 470.0 C585.8 468.3 618.3 464.0 640.0 460.0 C661.7 456.0 694.2 448.3 705.0 446.0" stroke="#484848" stroke-width="3.00"/>
<path d="M575.0 470.0 C585.8 468.3 618.3 464.0 640.0 460.0 C661.7 456.0 694.2 448.3 705.0 446.0" stroke="#626262" stroke-width="1.50"/>
<linearGradient id="bodyg" x1="0" y1="0" x2="0" y2="1"><stop offset="0" stop-color="#9a9a9a"/><stop offset="0.5" stop-color="#808080"/><stop offset="1" stop-color="#6e6e6e"/></linearGradient>
<path d="M575 476 Q640 466 705 448 L705 582 Q640 592 575 602 Z" fill="url(#bodyg)"/>
<path d="M575.0 478.0 C585.8 476.7 618.3 474.7 640.0 470.0 C661.7 465.3 694.2 453.3 705.0 450.0" stroke="#454545" stroke-width="4.80"/>
<path d="M575.0 478.0 C585.8 476.7 618.3 474.7 640.0 470.0 C661.7 465.3 694.2 453.3 705.0 450.0" stroke="#7d7d7d" stroke-width="3.60"/>
<path d="M575.0 478.0 C585.8 476.7 618.3 474.7 640.0 470.0 C661.7 465.3 694.2 453.3 705.0 450.0" stroke="#acacac" stroke-width="1.80"/>
<path d="M575.0 482.4 C585.8 481.1 618.3 478.8 640.0 474.4 C661.7 470.0 694.2 458.9 705.0 455.8" stroke="#3b3b3b" stroke-width="4.80"/>
<path d="M575.0 482.4 C585.8 481.1 618.3 478.8 640.0 474.4 C661.7 470.0 694.2 458.9 705.0 455.8" stroke="#6b6b6b" stroke-width="3.60"/>
<path d="M575.0 482.4 C585.8 481.1 618.3 478.8 640.0 474.4 C661.7 470.0 694.2 458.9 705.0 455.8" stroke="#939393" stroke-width="1.80"/>
<path d="M575.0 486.8 C585.8 485.5 618.3 483.0 640.0 478.8 C661.7 474.6 694.2 464.5 705.0 461.6" stroke="#474747" stroke-width="4.80"/>
<path d="M575.0 486.8 C585.8 485.5 618.3 483.0 640.0 478.8 C661.7 474.6 694.2 464.5 705.0 461.6" stroke="#818181" stroke-width="3.60"/>
<path d="M575.0 486.8 C585.8 485.5 618.3 483.0 640.0 478.8 C661.7 474.6 694.2 464.5 705.0 461.6" stroke="#b1b1b1" stroke-width="1.80"/>
<path d="M575.0 491.2 C585.8 489.9 618.3 487.2 640.0 483.2 C661.7 479.2 694.2 470.0 705.0 467.4" stroke="#3a3a3a" stroke-width="4.80"/>
<path d="M575.0 491.2 C585.8 489.9 618.3 487.2 640.0 483.2 C661.7 479.2 694.2 470.0 705.0 467.4" stroke="#6b6b6b" stroke-width="3.60"/>
<path d="M575.0 491.2 C585.8 489.9 618.3 487.2 640.0 483.2 C661.7 479.2 694.2 470.0 705.0 467.4" stroke="#929292" stroke-width="1.80"/>
<path d="M575.0 495.6 C585.8 494.3 618.3 491.3 640.0 487.6 C661.7 483.9 694.2 475.6 705.0 473.2" stroke="#4a4a4a" stroke-width="4.80"/>
<path d="M575.0 495.6 C585.8 494.3 618.3 491.3 640.0 487.6 C661.7 483.9 694.2 475.6 705.0 473.2" stroke="#878787" stroke-width="3.60"/>
<path d="M575.0 495.6 C585.8 494.3 618.3 491.3 640.0 487.6 C661.7 483.9 694.2 475.6 705.0 473.2" stroke="#b8b8b8" stroke-width="1.80"/>
<path d="M575.0 500.0 C585.8 498.7 618.3 495.5 640.0 492.0 C661.7 488.5 694.2 481.2 705.0 479.0" stroke="#474747" stroke-width="4.80"/>
<path d="M575.0 500.0 C585.8 498.7 618.3 495.5 640.0 492.0 C661.7 488.5 694.2 481.2 705.0 479.0" stroke="#818181" stroke-width="3.60"/>
<path d="M575.0 500.0 C585.8 498.7 618.3 495.5 640.0 492.0 C661.7 488.5 694.2 481.2 705.0 479.0" stroke="#b1b1b1" stroke-width="1.80"/>
<path d="M575.0 504.4 C585.8 503.1 618.3 499.7 640.0 496.4 C661.7 493.1 694.2 486.7 705.0 484.8" stroke="#303030" stroke-width="4.80"/>
<path d="M575.0 504.4 C585.8 503.1 618.3 499.7 640.0 496.4 C661.7 493.1 694.2 486.7 705.0 484.8" stroke="#585858" stroke-width="3.60"/>
<path d="M575.0 504.4 C585.8 503.1 618.3 499.7 640.0 496.4 C661.7 493.1 694.2 486.7 705.0 484.8" stroke="#787878" stroke-width="1.80"/>
<path d="M575.0 508.8 C585.8 507.5 618.3 503.8 640.0 500.8 C661.7 497.8 694.2 492.3 705.0 490.6" stroke="#363636" stroke-width="4.80"/>
<path d="M575.0 508.8 C585.8 507.5 618.3 503.8 640.0 500.8 C661.7 497.8 694.2 492.3 705.0 490.6" stroke="#626262" stroke-width="3.60"/>
<path d="M575.0 508.8 C585.8 507.5 618.3 503.8 640.0 500.8 C661.7 497.8 694.2 492.3 705.0 490.6" stroke="#868686" stroke-width="1.80"/>
<path d="M575.0 513.2 C585.8 511.9 618.3 508.0 640.0 505.2 C661.7 502.4 694.2 497.9 705.0 496.4" stroke="#494949" stroke-width="4.80"/>
<path d="M575.0 513.2 C585.8 511.9 618.3 508.0 640.0 505.2 C661.7 502.4 694.2 497.9 705.0 496.4" stroke="#858585" stroke-width="3.60"/>
<path d="M575.0 513.2 C585.8 511.9 618.3 508.0 640.0 505.2 C661.7 502.4 694.2 497.9 705.0 496.4" stroke="#b5b5b5" stroke-width="1.80"/>
<path d="M575.0 517.6 C585.8 516.3 618.3 512.2 640.0 509.6 C661.7 507.0 694.2 503.4 705.0 502.2" stroke="#3d3d3d" stroke-width="4.80"/>
<path d="M575.0 517.6 C585.8 516.3 618.3 512.2 640.0 509.6 C661.7 507.0 694.2 503.4 705.0 502.2" stroke="#6f6f6f" stroke-width="3.60"/>
<path d="M575.0 517.6 C585.8 516.3 618.3 512.2 640.0 509.6 C661.7 507.0 694.2 503.4 705.0 502.2" stroke="#989898" stroke-width="1.80"/>
<path d="M575.0 522.0 C585.8 520.7 618.3 516.3 640.0 514.0 C661.7 511.7 694.2 509.0 705.0 508.0" stroke="#4a4a4a" stroke-width="4.80"/>
<path d="M575.0 522.0 C585.8 520.7 618.3 516.3 640.0 514.0 C661.7 511.7 694.2 509.0 705.0 508.0" stroke="#888888" stroke-width="3.60"/>
<path d="M575.0 522.0 C585.8 520.7 618.3 516.3 640.0 514.0 C661.7 511.7 694.2 509.0 705.0 508.0" stroke="#bababa" stroke-width="1.80"/>
<path d="M622 494 Q645 486 664 486 Q650 498 626 503 Z" fill="#3a3b3e"/>
<ellipse cx="686" cy="551" rx="32" ry="5" fill="#2a2c30" transform="rotate(-22 686 551)"/>
<path d="M575 598 Q640 586 705 566" stroke="#b8b8b8" stroke-width="2.00"/>
</g>
</svg>
<!-- window frame -->
<div class="a" style="left:98px;top:55px;width:491px;height:620px;background:#0c0d10;"></div>
<div class="a" style="left:99px;top:56px;width:489px;height:618px;background:#e6e6e6;box-shadow:inset 0 0 0 1px #ebebeb;"></div>
<div class="a" style="left:550px;top:57px;width:31px;height:20px;background:#c75050;"></div>
<svg class="a" style="left:550px;top:57px" width="31" height="20"><path d="M12.5 7.5 L19.5 13.5 M19.5 7.5 L12.5 13.5" stroke="#fff" stroke-width="1.7"/></svg>
<!-- client -->
<div class="a" style="left:106px;top:86px;width:473px;height:579px;background:#fff;border:1px solid #c9c9c9;"></div>
<!-- section header 1 -->
<div class="a" style="left:123px;top:104px;width:441px;height:24px;background:#1f3a60;"></div>
<!-- combo -->
<div class="a" style="left:123px;top:140px;width:439px;height:22px;background:#fff;border:1px solid #d9d9d9;"></div>
<div class="a" style="left:125px;top:142px;width:420px;height:20px;background:#f2f2f2;"></div>
<svg class="a" style="left:545px;top:142px" width="18" height="20"><path d="M6.9 8.9 L10.4 12.8 L13.9 8.9" stroke="#acacac" stroke-width="1.8" fill="none"/></svg>
<!-- info rows -->
<!-- section header 2 -->
<div class="a" style="left:123px;top:306px;width:441px;height:24px;background:#1f3a60;"></div>
<!-- read panel -->
<div class="a" style="left:125px;top:395px;width:438px;height:90px;background:#213c62;"></div>
<div class="a" style="left:125px;top:395px;width:438px;height:25px;background:#1c2e4d;"></div>
<!-- write panel -->
<div class="a" style="left:125px;top:488px;width:438px;height:91px;background:#213c62;"></div>
<div class="a" style="left:125px;top:488px;width:438px;height:25px;background:#1c2e4d;"></div>
<svg class="a" style="left:0;top:0" width="687" height="732" shape-rendering="crispEdges">
<rect x="137.3" y="423" width="1.4" height="37" fill="#2f4a70" shape-rendering="auto"/>
<rect x="135" y="460" width="6" height="20" fill="#3f5f84"/>
<rect x="146.3" y="423" width="1.4" height="37" fill="#2f4a70" shape-rendering="auto"/>
<rect x="144" y="460" width="6" height="20" fill="#3f5f84"/>
<rect x="155.3" y="423" width="1.4" height="36" fill="#2f4a70" shape-rendering="auto"/>
<rect x="153" y="459" width="6" height="21" fill="#3f5f84"/>
<rect x="163.3" y="423" width="1.4" height="33" fill="#2f4a70" shape-rendering="auto"/>
<rect x="161" y="456" width="6" height="24" fill="#3f5f84"/>
<rect x="172.3" y="423" width="1.4" height="33" fill="#2f4a70" shape-rendering="auto"/>
<rect x="170" y="456" width="6" height="24" fill="#3f5f84"/>
<rect x="181.3" y="423" width="1.4" height="33" fill="#2f4a70" shape-rendering="auto"/>
<rect x="179" y="456" width="6" height="24" fill="#3f5f84"/>
<rect x="190.3" y="423" width="1.4" height="30" fill="#2f4a70" shape-rendering="auto"/>
<rect x="188" y="453" width="6" height="27" fill="#3f5f84"/>
<rect x="199.3" y="423" width="1.4" height="30" fill="#2f4a70" shape-rendering="auto"/>
<rect x="197" y="453" width="6" height="27" fill="#3f5f84"/>
<rect x="207.3" y="423" width="1.4" height="31" fill="#2f4a70" shape-rendering="auto"/>
<rect x="205" y="454" width="6" height="26" fill="#3f5f84"/>
<rect x="216.3" y="423" width="1.4" height="25" fill="#2f4a70" shape-rendering="auto"/>
<rect x="214" y="448" width="6" height="32" fill="#3f5f84"/>
<rect x="225.3" y="423" width="1.4" height="25" fill="#2f4a70" shape-rendering="auto"/>
<rect x="223" y="448" width="6" height="32" fill="#3f5f84"/>
<rect x="234.3" y="423" width="1.4" height="24" fill="#2f4a70" shape-rendering="auto"/>
<rect x="232" y="447" width="6" height="33" fill="#3f5f84"/>
<rect x="242.3" y="423" width="1.4" height="27" fill="#2f4a70" shape-rendering="auto"/>
<rect x="240" y="450" width="6" height="30" fill="#3f5f84"/>
<rect x="251.3" y="423" width="1.4" height="27" fill="#2f4a70" shape-rendering="auto"/>
<rect x="249" y="450" width="6" height="30" fill="#3f5f84"/>
<rect x="260.3" y="423" width="1.4" height="27" fill="#2f4a70" shape-rendering="auto"/>
<rect x="258" y="450" width="6" height="30" fill="#3f5f84"/>
<rect x="269.3" y="423" width="1.4" height="25" fill="#2f4a70" shape-rendering="auto"/>
<rect x="267" y="448" width="6" height="32" fill="#3f5f84"/>
<rect x="278.3" y="423" width="1.4" height="26" fill="#2f4a70" shape-rendering="auto"/>
<rect x="276" y="449" width="6" height="31" fill="#3f5f84"/>
<rect x="286.3" y="423" width="1.4" height="25" fill="#2f4a70" shape-rendering="auto"/>
<rect x="284" y="448" width="6" height="32" fill="#3f5f84"/>
<rect x="295.3" y="423" width="1.4" height="24" fill="#2f4a70" shape-rendering="auto"/>
<rect x="293" y="447" width="6" height="33" fill="#3f5f84"/>
<rect x="304.3" y="423" width="1.4" height="25" fill="#2f4a70" shape-rendering="auto"/>
<rect x="302" y="448" width="6" height="32" fill="#3f5f84"/>
<rect x="313.3" y="423" width="1.4" height="26" fill="#2f4a70" shape-rendering="auto"/>
<rect x="311" y="449" width="6" height="31" fill="#3f5f84"/>
<rect x="322.3" y="423" width="1.4" height="24" fill="#2f4a70" shape-rendering="auto"/>
<rect x="320" y="447" width="6" height="33" fill="#3f5f84"/>
<rect x="330.3" y="423" width="1.4" height="26" fill="#2f4a70" shape-rendering="auto"/>
<rect x="328" y="449" width="6" height="31" fill="#3f5f84"/>
<rect x="339.3" y="423" width="1.4" height="27" fill="#2f4a70" shape-rendering="auto"/>
<rect x="337" y="450" width="6" height="30" fill="#3f5f84"/>
<rect x="348.3" y="423" width="1.4" height="51" fill="#2f4a70" shape-rendering="auto"/>
<rect x="346" y="474" width="6" height="6" fill="#3f5f84"/>
<rect x="357.3" y="423" width="1.4" height="50" fill="#2f4a70" shape-rendering="auto"/>
<rect x="355" y="473" width="6" height="7" fill="#3f5f84"/>
<rect x="365.3" y="423" width="1.4" height="38" fill="#2f4a70" shape-rendering="auto"/>
<rect x="363" y="461" width="6" height="19" fill="#3f5f84"/>
<rect x="374.3" y="423" width="1.4" height="47" fill="#2f4a70" shape-rendering="auto"/>
<rect x="372" y="470" width="6" height="10" fill="#3f5f84"/>
<rect x="383.3" y="423" width="1.4" height="22" fill="#2f4a70" shape-rendering="auto"/>
<rect x="381" y="445" width="6" height="35" fill="#3f5f84"/>
<rect x="392.3" y="423" width="1.4" height="22" fill="#2f4a70" shape-rendering="auto"/>
<rect x="390" y="445" width="6" height="35" fill="#3f5f84"/>
<rect x="401.3" y="423" width="1.4" height="42" fill="#2f4a70" shape-rendering="auto"/>
<rect x="399" y="465" width="6" height="15" fill="#3f5f84"/>
<rect x="409.3" y="423" width="1.4" height="14" fill="#2f4a70" shape-rendering="auto"/>
<rect x="407" y="437" width="6" height="43" fill="#3f5f84"/>
<rect x="418.3" y="423" width="1.4" height="15" fill="#2f4a70" shape-rendering="auto"/>
<rect x="416" y="438" width="6" height="42" fill="#3f5f84"/>
<rect x="427.3" y="423" width="1.4" height="28" fill="#2f4a70" shape-rendering="auto"/>
<rect x="425" y="451" width="6" height="29" fill="#3f5f84"/>
<rect x="436.3" y="423" width="1.4" height="9" fill="#2f4a70" shape-rendering="auto"/>
<rect x="434" y="432" width="6" height="48" fill="#3f5f84"/>
<rect x="445.3" y="423" width="1.4" height="9" fill="#2f4a70" shape-rendering="auto"/>
<rect x="443" y="432" width="6" height="48" fill="#3f5f84"/>
<rect x="453.3" y="423" width="1.4" height="18" fill="#2f4a70" shape-rendering="auto"/>
<rect x="451" y="441" width="6" height="39" fill="#3f5f84"/>
<rect x="462.3" y="423" width="1.4" height="9" fill="#2f4a70" shape-rendering="auto"/>
<rect x="460" y="432" width="6" height="48" fill="#3f5f84"/>
<rect x="471.3" y="423" width="1.4" height="9" fill="#2f4a70" shape-rendering="auto"/>
<rect x="469" y="432" width="6" height="48" fill="#3f5f84"/>
<rect x="480.3" y="423" width="1.4" height="16" fill="#2f4a70" shape-rendering="auto"/>
<rect x="478" y="439" width="6" height="41" fill="#3f5f84"/>
<rect x="488.3" y="423" width="1.4" height="9" fill="#2f4a70" shape-rendering="auto"/>
<rect x="486" y="432" width="6" height="48" fill="#3f5f84"/>
<rect x="497.3" y="423" width="1.4" height="9" fill="#2f4a70" shape-rendering="auto"/>
<rect x="495" y="432" width="6" height="48" fill="#3f5f84"/>
<rect x="506.3" y="423" width="1.4" height="17" fill="#2f4a70" shape-rendering="auto"/>
<rect x="504" y="440" width="6" height="40" fill="#3f5f84"/>
<rect x="515.3" y="423" width="1.4" height="9" fill="#2f4a70" shape-rendering="auto"/>
<rect x="513" y="432" width="6" height="48" fill="#a9e8fb"/>
<rect x="524.3" y="423" width="1.4" height="9" fill="#2f4a70" shape-rendering="auto"/>
<rect x="522" y="432" width="6" height="48" fill="#3f5f84"/>
<rect x="532.3" y="423" width="1.4" height="14" fill="#2f4a70" shape-rendering="auto"/>
<rect x="530" y="437" width="6" height="43" fill="#3f5f84"/>
<rect x="541.3" y="423" width="1.4" height="9" fill="#2f4a70" shape-rendering="auto"/>
<rect x="539" y="432" width="6" height="48" fill="#3f5f84"/>
<rect x="550.3" y="423" width="1.4" height="9" fill="#2f4a70" shape-rendering="auto"/>
<rect x="548" y="432" width="6" height="48" fill="#3f5f84"/>
<rect x="137.3" y="516" width="1.4" height="18" fill="#2f4a70" shape-rendering="auto"/>
<rect x="135" y="534" width="6" height="40" fill="#3f5f84"/>
<rect x="146.3" y="516" width="1.4" height="18" fill="#2f4a70" shape-rendering="auto"/>
<rect x="144" y="534" width="6" height="40" fill="#3f5f84"/>
<rect x="155.3" y="516" width="1.4" height="18" fill="#2f4a70" shape-rendering="auto"/>
<rect x="153" y="534" width="6" height="40" fill="#3f5f84"/>
<rect x="163.3" y="516" width="1.4" height="15" fill="#2f4a70" shape-rendering="auto"/>
<rect x="161" y="531" width="6" height="43" fill="#3f5f84"/>
<rect x="172.3" y="516" width="1.4" height="15" fill="#2f4a70" shape-rendering="auto"/>
<rect x="170" y="531" width="6" height="43" fill="#3f5f84"/>
<rect x="181.3" y="516" width="1.4" height="16" fill="#2f4a70" shape-rendering="auto"/>
<rect x="179" y="532" width="6" height="42" fill="#3f5f84"/>
<rect x="190.3" y="516" width="1.4" height="17" fill="#2f4a70" shape-rendering="auto"/>
<rect x="188" y="533" width="6" height="41" fill="#3f5f84"/>
<rect x="199.3" y="516" width="1.4" height="14" fill="#2f4a70" shape-rendering="auto"/>
<rect x="197" y="530" width="6" height="44" fill="#3f5f84"/>
<rect x="207.3" y="516" width="1.4" height="14" fill="#2f4a70" shape-rendering="auto"/>
<rect x="205" y="530" width="6" height="44" fill="#3f5f84"/>
<rect x="216.3" y="516" width="1.4" height="13" fill="#2f4a70" shape-rendering="auto"/>
<rect x="214" y="529" width="6" height="45" fill="#3f5f84"/>
<rect x="225.3" y="516" width="1.4" height="13" fill="#2f4a70" shape-rendering="auto"/>
<rect x="223" y="529" width="6" height="45" fill="#3f5f84"/>
<rect x="234.3" y="516" width="1.4" height="13" fill="#2f4a70" shape-rendering="auto"/>
<rect x="232" y="529" width="6" height="45" fill="#3f5f84"/>
<rect x="242.3" y="516" width="1.4" height="13" fill="#2f4a70" shape-rendering="auto"/>
<rect x="240" y="529" width="6" height="45" fill="#3f5f84"/>
<rect x="251.3" y="516" width="1.4" height="13" fill="#2f4a70" shape-rendering="auto"/>
<rect x="249" y="529" width="6" height="45" fill="#3f5f84"/>
<rect x="260.3" y="516" width="1.4" height="13" fill="#2f4a70" shape-rendering="auto"/>
<rect x="258" y="529" width="6" height="45" fill="#3f5f84"/>
<rect x="269.3" y="516" width="1.4" height="17" fill="#2f4a70" shape-rendering="auto"/>
<rect x="267" y="533" width="6" height="41" fill="#3f5f84"/>
<rect x="278.3" y="516" width="1.4" height="14" fill="#2f4a70" shape-rendering="auto"/>
<rect x="276" y="530" width="6" height="44" fill="#3f5f84"/>
<rect x="286.3" y="516" width="1.4" height="12" fill="#2f4a70" shape-rendering="auto"/>
<rect x="284" y="528" width="6" height="46" fill="#3f5f84"/>
<rect x="295.3" y="516" width="1.4" height="12" fill="#2f4a70" shape-rendering="auto"/>
<rect x="293" y="528" width="6" height="46" fill="#3f5f84"/>
<rect x="304.3" y="516" width="1.4" height="12" fill="#2f4a70" shape-rendering="auto"/>
<rect x="302" y="528" width="6" height="46" fill="#3f5f84"/>
<rect x="313.3" y="516" width="1.4" height="12" fill="#2f4a70" shape-rendering="auto"/>
<rect x="311" y="528" width="6" height="46" fill="#3f5f84"/>
<rect x="322.3" y="516" width="1.4" height="12" fill="#2f4a70" shape-rendering="auto"/>
<rect x="320" y="528" width="6" height="46" fill="#3f5f84"/>
<rect x="330.3" y="516" width="1.4" height="12" fill="#2f4a70" shape-rendering="auto"/>
<rect x="328" y="528" width="6" height="46" fill="#3f5f84"/>
<rect x="339.3" y="516" width="1.4" height="12" fill="#2f4a70" shape-rendering="auto"/>
<rect x="337" y="528" width="6" height="46" fill="#3f5f84"/>
<rect x="348.3" y="516" width="1.4" height="43" fill="#2f4a70" shape-rendering="auto"/>
<rect x="346" y="559" width="6" height="15" fill="#3f5f84"/>
<rect x="357.3" y="516" width="1.4" height="33" fill="#2f4a70" shape-rendering="auto"/>
<rect x="355" y="549" width="6" height="25" fill="#3f5f84"/>
<rect x="365.3" y="516" width="1.4" height="34" fill="#2f4a70" shape-rendering="auto"/>
<rect x="363" y="550" width="6" height="24" fill="#3f5f84"/>
<rect x="374.3" y="516" width="1.4" height="30" fill="#2f4a70" shape-rendering="auto"/>
<rect x="372" y="546" width="6" height="28" fill="#3f5f84"/>
<rect x="383.3" y="516" width="1.4" height="22" fill="#2f4a70" shape-rendering="auto"/>
<rect x="381" y="538" width="6" height="36" fill="#3f5f84"/>
<rect x="392.3" y="516" width="1.4" height="22" fill="#2f4a70" shape-rendering="auto"/>
<rect x="390" y="538" width="6" height="36" fill="#3f5f84"/>
<rect x="401.3" y="516" width="1.4" height="22" fill="#2f4a70" shape-rendering="auto"/>
<rect x="399" y="538" width="6" height="36" fill="#3f5f84"/>
<rect x="409.3" y="516" width="1.4" height="16" fill="#2f4a70" shape-rendering="auto"/>
<rect x="407" y="532" width="6" height="42" fill="#3f5f84"/>
<rect x="418.3" y="516" width="1.4" height="16" fill="#2f4a70" shape-rendering="auto"/>
<rect x="416" y="532" width="6" height="42" fill="#3f5f84"/>
<rect x="427.3" y="516" width="1.4" height="16" fill="#2f4a70" shape-rendering="auto"/>
<rect x="425" y="532" width="6" height="42" fill="#3f5f84"/>
<rect x="436.3" y="516" width="1.4" height="11" fill="#2f4a70" shape-rendering="auto"/>
<rect x="434" y="527" width="6" height="47" fill="#3f5f84"/>
<rect x="445.3" y="516" width="1.4" height="11" fill="#2f4a70" shape-rendering="auto"/>
<rect x="443" y="527" width="6" height="47" fill="#3f5f84"/>
<rect x="453.3" y="516" width="1.4" height="14" fill="#2f4a70" shape-rendering="auto"/>
<rect x="451" y="530" width="6" height="44" fill="#3f5f84"/>
<rect x="462.3" y="516" width="1.4" height="9" fill="#2f4a70" shape-rendering="auto"/>
<rect x="460" y="525" width="6" height="49" fill="#3f5f84"/>
<rect x="471.3" y="516" width="1.4" height="9" fill="#2f4a70" shape-rendering="auto"/>
<rect x="469" y="525" width="6" height="49" fill="#3f5f84"/>
<rect x="480.3" y="516" width="1.4" height="10" fill="#2f4a70" shape-rendering="auto"/>
<rect x="478" y="526" width="6" height="48" fill="#3f5f84"/>
<rect x="488.3" y="516" width="1.4" height="9" fill="#2f4a70" shape-rendering="auto"/>
<rect x="486" y="525" width="6" height="49" fill="#3f5f84"/>
<rect x="497.3" y="516" width="1.4" height="9" fill="#2f4a70" shape-rendering="auto"/>
<rect x="495" y="525" width="6" height="49" fill="#3f5f84"/>
<rect x="506.3" y="516" width="1.4" height="11" fill="#2f4a70" shape-rendering="auto"/>
<rect x="504" y="527" width="6" height="47" fill="#3f5f84"/>
<rect x="515.3" y="516" width="1.4" height="9" fill="#2f4a70" shape-rendering="auto"/>
<rect x="513" y="525" width="6" height="49" fill="#3f5f84"/>
<rect x="524.3" y="516" width="1.4" height="9" fill="#2f4a70" shape-rendering="auto"/>
<rect x="522" y="525" width="6" height="49" fill="#3f5f84"/>
<rect x="532.3" y="516" width="1.4" height="10" fill="#2f4a70" shape-rendering="auto"/>
<rect x="530" y="526" width="6" height="48" fill="#3f5f84"/>
<rect x="541.3" y="516" width="1.4" height="9" fill="#2f4a70" shape-rendering="auto"/>
<rect x="539" y="525" width="6" height="49" fill="#3f5f84"/>
<rect x="550.3" y="516" width="1.4" height="9" fill="#2f4a70" shape-rendering="auto"/>
<rect x="548" y="525" width="6" height="49" fill="#3f5f84"/>
</svg>
<!-- separator -->
<div class="a" style="left:107px;top:607px;width:473px;height:1px;background:#c9c9c9;"></div>
<!-- OK button -->
<div class="a" style="left:301px;top:625px;width:84px;height:22px;border:1px solid #3c93e8;background:linear-gradient(#efefef,#e3e3e3);"></div>
<!-- share icon -->
<svg class="a" style="left:530px;top:620px" width="40" height="35"><path d="M20.4 9.6 L25.9 15.1 L20.4 20.7 L20.4 17.4 C15 17.2 11 18.5 9.6 24.5 C7.5 19 8.5 13.5 20.4 12.6 Z" fill="#000"/></svg>
<!-- context menu -->
<div class="a" style="left:477px;top:487px;width:149px;height:130px;background:rgba(0,0,0,0.28);filter:blur(1px);"></div>
<div class="a" style="left:471px;top:481px;width:150px;height:131px;background:#fff;border-style:solid;border-width:1px;border-color:#f2f2f2 #e8e8e8 #a9a9a9 #b9b9b9;"></div>
<div class="a" style="left:474px;top:484px;width:146px;height:23px;background:#1f3a60;"></div>
<div class="a" style="left:474px;top:559px;width:146px;height:23px;background:#1f3a60;"></div>
<div class="a" style="left:474px;top:585px;width:146px;height:23px;background:#d3e6f9;"></div>
<div class="t" style="left:218.70px;top:64px;font-size:16px;color:#1e1e1e;-webkit-text-stroke:0.25px #1e1e1e;transform:scaleX(0.9158);transform-origin:0 0">Cold-cache Sequential I/O Benchmark</div>
<div class="t" style="left:131.70px;top:110px;font-size:12px;font-weight:bold;color:#fff;transform:scaleX(0.9493);transform-origin:0 0">Test location</div>
<div class="t" style="left:132.50px;top:146px;font-size:12px;color:#6a6a6a;-webkit-text-stroke:0.25px #6a6a6a;transform:scaleX(0.9688);transform-origin:0 0">C:\</div>
<div class="t" style="left:138.70px;top:177px;font-size:12px;color:#858585;-webkit-text-stroke:0.25px #858585;transform:scaleX(0.9311);transform-origin:0 0">File system</div>
<div class="t" style="left:138.80px;top:202px;font-size:12px;color:#858585;-webkit-text-stroke:0.25px #858585;transform:scaleX(1.0075);transform-origin:0 0">Volume</div>
<div class="t" style="left:138.80px;top:227px;font-size:12px;color:#858585;-webkit-text-stroke:0.25px #858585;transform:scaleX(0.9216);transform-origin:0 0">Device</div>
<div class="t" style="left:138.80px;top:252px;font-size:12px;color:#858585;-webkit-text-stroke:0.25px #858585;transform:scaleX(0.9981);transform-origin:0 0">Controller</div>
<div class="t" style="left:138.80px;top:277px;font-size:12px;color:#858585;-webkit-text-stroke:0.25px #858585;transform:scaleX(0.9400);transform-origin:0 0">Host OS</div>
<div class="t" style="left:242.80px;top:177px;font-size:12px;color:#1a1a1a;-webkit-text-stroke:0.25px #1a1a1a;transform:scaleX(0.9016);transform-origin:0 0">NTFS</div>
<div class="t" style="left:285.70px;top:177px;font-size:12px;color:#1a1a1a;-webkit-text-stroke:0.25px #1a1a1a;transform:scaleX(0.9684);transform-origin:0 0">4096 bytes/cluster</div>
<div class="t" style="left:242.80px;top:202px;font-size:12px;color:#1a1a1a;-webkit-text-stroke:0.25px #1a1a1a;transform:scaleX(0.9649);transform-origin:0 0">Simple</div>
<div class="t" style="left:294.80px;top:202px;font-size:12px;color:#1a1a1a;-webkit-text-stroke:0.25px #1a1a1a;transform:scaleX(0.8967);transform-origin:0 0">C27B-6745</div>
<div class="t" style="left:242.80px;top:227px;font-size:12px;color:#1a1a1a;-webkit-text-stroke:0.25px #1a1a1a;transform:scaleX(0.9471);transform-origin:0 0">Samsung</div>
<div class="t" style="left:307.60px;top:227px;font-size:12px;color:#1a1a1a;-webkit-text-stroke:0.25px #1a1a1a;transform:scaleX(0.9242);transform-origin:0 0">MZVPV512HDGL-00000</div>
<div class="t" style="left:242.80px;top:252px;font-size:12px;color:#1a1a1a;-webkit-text-stroke:0.25px #1a1a1a;transform:scaleX(0.9839);transform-origin:0 0">Samsung NVMe Controller</div>
<div class="t" style="left:242.80px;top:277px;font-size:12px;color:#1a1a1a;-webkit-text-stroke:0.25px #1a1a1a;transform:scaleX(0.9565);transform-origin:0 0">Windows 8.1</div>
<div class="t" style="left:131.00px;top:312px;font-size:12px;font-weight:bold;color:#fff;transform:scaleX(0.9439);transform-origin:0 0">CCSIO Benchmark</div>
<div class="t" style="left:138.70px;top:343px;font-size:12px;color:#858585;-webkit-text-stroke:0.25px #858585;transform:scaleX(1.0083);transform-origin:0 0">Configuration</div>
<div class="t" style="left:138.70px;top:368px;font-size:12px;color:#858585;-webkit-text-stroke:0.25px #858585;transform:scaleX(0.9029);transform-origin:0 0">Status</div>
<div class="t" style="left:242.80px;top:343px;font-size:12px;color:#1a1a1a;-webkit-text-stroke:0.25px #1a1a1a;transform:scaleX(1.0129);transform-origin:0 0">Quick</div>
<div class="t" style="left:242.80px;top:368px;font-size:12px;color:#1a1a1a;-webkit-text-stroke:0.25px #1a1a1a;transform:scaleX(1.0052);transform-origin:0 0">Completed</div>
<div class="t" style="left:133.60px;top:402px;font-size:12px;font-weight:bold;color:#fff;transform:scaleX(0.9418);transform-origin:0 0">Read speed</div>
<div class="t" style="left:484.15px;top:402px;font-size:12px;font-weight:bold;color:#a6e8fc;transform:scaleX(0.9986);transform-origin:0 0">2153.2</div>
<div class="t" style="left:525.70px;top:402px;font-size:12px;color:#8294ac;transform:scaleX(0.9419);transform-origin:0 0">MBps</div>
<div class="t" style="left:133.20px;top:495px;font-size:12px;font-weight:bold;color:#fff;transform:scaleX(0.9941);transform-origin:0 0">Write speed</div>
<div class="t" style="left:486.60px;top:490px;font-size:12px;font-weight:bold;color:#fff;transform:scaleX(0.9313);transform-origin:0 0">Test results</div>
<div class="t" style="left:486.60px;top:516px;font-size:12px;color:#1e1e1e;-webkit-text-stroke:0.25px #1e1e1e;transform:scaleX(0.9613);transform-origin:0 0">View test report...</div>
<div class="t" style="left:486.60px;top:539px;font-size:12px;color:#1e1e1e;-webkit-text-stroke:0.25px #1e1e1e;transform:scaleX(0.9170);transform-origin:0 0">Save report as...</div>
<div class="t" style="left:486.10px;top:565px;font-size:12px;font-weight:bold;color:#fff;transform:scaleX(0.9265);transform-origin:0 0">Share</div>
<div class="t" style="left:486.30px;top:591px;font-size:12px;color:#1e1e1e;-webkit-text-stroke:0.25px #1e1e1e;transform:scaleX(0.9337);transform-origin:0 0">Share screenshot...</div>
<div class="t" style="left:336.40px;top:631px;font-size:12px;color:#111;-webkit-text-stroke:0.25px #111;transform:scaleX(0.8941);transform-origin:0 0">OK</div>
<div class="a" style="left:277.5px;top:182.9px;width:2px;height:2px;background:#2a2a2a;border-radius:1px"></div>
<div class="a" style="left:285.5px;top:207.9px;width:2px;height:2px;background:#2a2a2a;border-radius:1px"></div>
<div class="a" style="left:298.9px;top:232.7px;width:2px;height:2px;background:#2a2a2a;border-radius:1px"></div>
</body></html>
